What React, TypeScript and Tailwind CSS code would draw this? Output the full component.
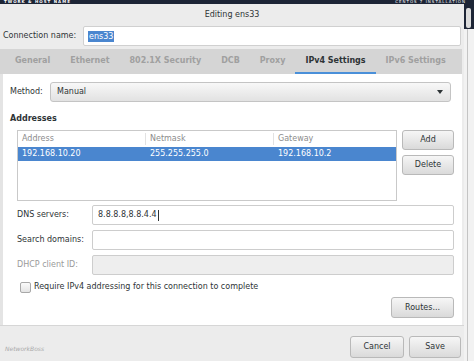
const font = { fontFamily: '"DejaVu Sans", "Liberation Sans", sans-serif' };

const Btn = ({ label, className = "" }: { label: string; className?: string }) => (
  <div
    className={`flex items-center justify-center rounded-[3px] border border-[#b9b9b9] bg-gradient-to-b from-[#f6f6f6] to-[#dadada] text-[8px] text-[#2e3436] ${className}`}
  >
    {label}
  </div>
);

const Field = ({ label, value, disabled }: { label: string; value?: string; disabled?: boolean }) => (
  <div className="flex h-[20px] items-center">
    <span className={`w-[75px] text-[8px] ${disabled ? "text-[#9a9a9a]" : "text-[#2e3436]"}`}>{label}</span>
    <div
      className={`flex h-[20px] w-[362px] items-center rounded-[2px] border border-[#cdcdcd] px-[5px] text-[8px] text-[#2e3436] ${
        disabled ? "bg-[#eeeeee]" : "bg-white"
      }`}
    >
      {value}
      {value && <span className="ml-[1px] h-[11px] w-[1px] bg-[#2e3436]" />}
    </div>
  </div>
);

const tabs = ["General", "Ethernet", "802.1X Security", "DCB", "Proxy", "IPv4 Settings", "IPv6 Settings"];

export default function App() {
  return (
    <div className="flex h-[361px] w-[474px] flex-col overflow-hidden bg-[#e8e8e8]" style={font}>
      {/* installer header, mostly hidden behind the dialog */}
      <div className="flex h-[4px] shrink-0 items-end justify-between bg-[#1d2536] px-[4px]">
        <span className="text-[4px] font-bold leading-[4px] tracking-[1px] text-white">TWORK &amp; HOST NAME</span>
        <span className="mr-[4px] text-[4px] leading-[4px] tracking-[1px] text-white">CENTOS 7 INSTALLATION</span>
      </div>

      <div className="flex flex-1">
        {/* dialog */}
        <div className="flex w-[464px] flex-col bg-[#ececec]">
          <div className="flex h-[20px] items-center justify-center pt-[2px] text-[8px] text-[#2e3436]">Editing ens33</div>

          <div className="mt-[2px] flex h-[20px] items-center pl-[3px]">
            <span className="w-[80px] text-[8px] text-[#2e3436]">Connection name:</span>
            <div className="flex h-[20px] w-[378px] items-center rounded-[2px] border border-[#d0d0d0] bg-white px-[4px]">
              <span className="bg-[#4a86cf] px-[1px] text-[8px] leading-[11px] text-white">ens33</span>
            </div>
          </div>

          <div className="mt-[3px] mr-[2px] flex flex-col">
            {/* tabs */}
            <div className="flex h-[25px] items-stretch bg-[#d5d5d5] pl-[5px]">
              {tabs.map((t) => {
                const active = t === "IPv4 Settings";
                return (
                  <div
                    key={t}
                    className={`flex items-center whitespace-nowrap border-b-2 px-[10px] pt-[1px] text-[8px] font-bold ${
                      active ? "border-[#4a90d9] text-[#2e3436]" : "border-transparent text-[#a0a0a0]"
                    }`}
                  >
                    {t}
                  </div>
                );
              })}
            </div>

            {/* tab content */}
            <div className="flex h-[251px] flex-col border-l-[3px] border-[#e4e4e4] bg-white pr-[8px]">
              <div className="mt-[8px] flex h-[20px] items-center pl-[7px]">
                <span className="w-[40px] text-[8px] text-[#2e3436]">Method:</span>
                <div className="flex h-[20px] w-[401px] items-center justify-between rounded-[3px] border border-[#c4c4c4] bg-gradient-to-b from-[#f8f8f8] to-[#e2e2e2] px-[6px] text-[8px] text-[#2e3436]">
                  Manual
                  <svg width="6" height="4" viewBox="0 0 6 4" className="mr-[1px]">
                    <path d="M0 0h6L3 4z" fill="#2e3436" />
                  </svg>
                </div>
              </div>

              <div className="mt-[12px] pl-[7px] text-[8px] font-bold leading-[10px] text-[#2e3436]">Addresses</div>

              <div className="mt-[6px] flex gap-[5px] pl-[14px]">
                <div className="h-[71px] w-[380px] border border-[#c9c9c9] bg-white">
                  <div className="flex h-[16px] items-center text-[8px] text-[#8c8c8c]">
                    <span className="w-[128px] border-r border-[#e2e2e2] pl-[4px]">Address</span>
                    <span className="w-[128px] border-r border-[#e2e2e2] pl-[4px]">Netmask</span>
                    <span className="pl-[4px]">Gateway</span>
                  </div>
                  <div className="flex h-[14px] items-center bg-[#4a86cf] text-[8px] text-white">
                    <span className="w-[128px] pl-[4px]">192.168.10.20</span>
                    <span className="w-[128px] pl-[4px]">255.255.255.0</span>
                    <span className="pl-[4px]">192.168.10.2</span>
                  </div>
                </div>
                <div className="flex flex-col gap-[5px]">
                  <Btn label="Add" className="h-[20px] w-[52px]" />
                  <Btn label="Delete" className="h-[20px] w-[52px]" />
                </div>
              </div>

              <div className="mt-[4px] flex flex-col gap-[5px] pl-[14px]">
                <Field label="DNS servers:" value="8.8.8.8,8.8.4.4" />
                <Field label="Search domains:" />
                <Field label="DHCP client ID:" disabled />
              </div>

              <div className="mt-[6px] flex items-center pl-[17px]">
                <div className="h-[11px] w-[11px] rounded-[2px] border border-[#a8a8a8] bg-gradient-to-b from-[#fafafa] to-[#e4e4e4]" />
                <span className="ml-[3px] text-[8px] text-[#2e3436]">Require IPv4 addressing for this connection to complete</span>
              </div>

              <div className="mt-[4px] flex justify-end">
                <Btn label="Routes..." className="h-[21px] w-[63px]" />
              </div>
            </div>
          </div>

          {/* action area */}
          <div className="flex flex-1 items-end justify-between border-t border-[#d6d6d6] pb-[3px] pl-[5px] pr-[3px]">
            <span className="mb-[5px] text-[6px] italic text-[#a9a9a9]">NetworkBoss</span>
            <div className="flex gap-[5px]">
              <Btn label="Cancel" className="h-[22px] w-[54px]" />
              <Btn label="Save" className="h-[22px] w-[52px]" />
            </div>
          </div>
        </div>

        {/* edge of the installer window behind */}
        <div className="flex w-[10px] flex-col">
          <div className="flex h-[25px] bg-[#1d2536] pl-[2px] pt-[4px]">
            <div className="h-[20px] w-[5px] rounded-[2px] bg-[#dcdcdc]" />
          </div>
          <div className="flex flex-1 bg-[#f2f2f2] pl-[3px]">
            <div className="w-[1px] bg-[#c4c4c4]" />
          </div>
        </div>
      </div>
    </div>
  );
}
